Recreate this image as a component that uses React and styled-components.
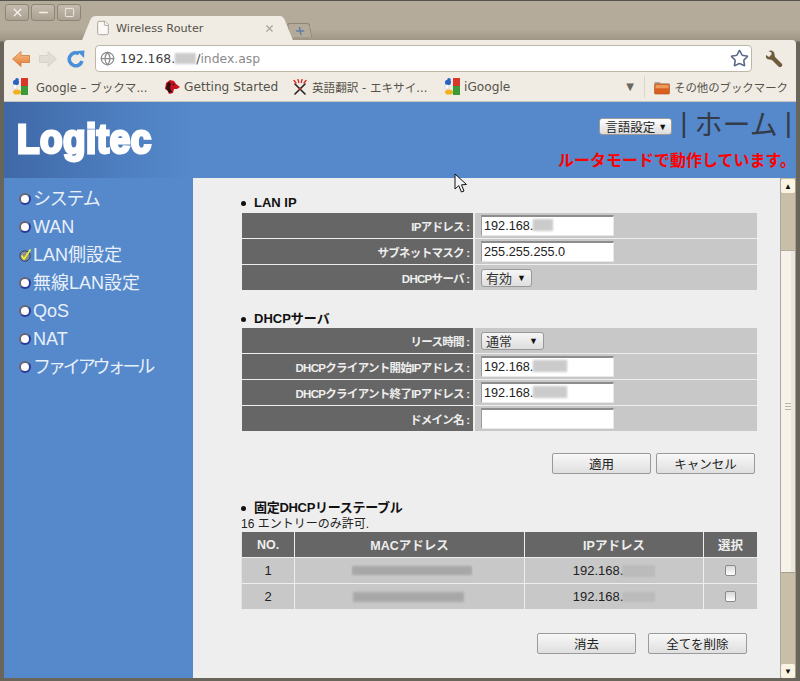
import React from "react";
import styled, { createGlobalStyle } from "styled-components";
import { X, Minus, Square, Plus, File, Globe, Star } from "lucide-react";

const UI_FONT = `"DejaVu Sans", "Noto Sans CJK JP", sans-serif`;
const PAGE_FONT = `"Liberation Sans", "Noto Sans CJK JP", sans-serif`;

const GlobalStyle = createGlobalStyle`
  html, body { margin: 0; padding: 0; background: #6a655a; }
  * { box-sizing: border-box; }
  svg { flex: none; }
`;

const Win = styled.div`
  position: relative;
  width: 800px;
  height: 681px;
  overflow: hidden;
  display: flex;
  flex-direction: column;
  padding: 0 4px 3px 4px;
  background: linear-gradient(#b5ab9b 0, #b5ab9b 28px, #9c9484 40px, #6a655a 41px);
  border-top: 1px solid #55524a;
  font-family: ${UI_FONT};
`;

const TitleBar = styled.div`
  height: 39px;
  flex: none;
  display: flex;
  align-items: flex-start;
  padding-left: 1px;
`;

const WinButtons = styled.div`
  display: flex;
  gap: 2px;
  margin-top: 3px;
`;

const WinBtn = styled.div`
  width: 24px;
  height: 17px;
  display: flex;
  align-items: center;
  justify-content: center;
  border: 1px solid #8d8676;
  border-radius: 3px;
  background: linear-gradient(#c4bbac, #aaa192);
  color: #f4f1ea;
`;

const Tab = styled.div`
  position: relative;
  width: 188px;
  height: 24px;
  margin: 15px 0 0 14px;
  padding: 0 8px 0 0;
  display: flex;
  align-items: center;
  gap: 5px;
  background: #f0ece4;
  border-radius: 4px 4px 0 0;
  font-size: 11.2px;
  color: #55524a;
  z-index: 1;
  &::before, &::after {
    content: "";
    position: absolute;
    top: 0;
    bottom: 0;
    width: 18px;
    background: #f0ece4;
  }
  &::before { left: -8px; transform: skewX(-22deg); border-radius: 4px 0 0 0; }
  &::after { right: -5px; transform: skewX(22deg); border-radius: 0 4px 0 0; }
  & > * { position: relative; z-index: 1; }
`;

const TabTitle = styled.span`
  flex: 1;
`;

const NewTab = styled.div`
  width: 23px;
  height: 14px;
  margin: 22px 0 0 5px;
  display: flex;
  align-items: center;
  justify-content: center;
  background: #b3aa99;
  border: 1px solid #8d8676;
  border-bottom: none;
  border-radius: 3px 3px 0 0;
  transform: skewX(10deg);
`;

const Chrome = styled.div`
  flex: none;
  height: 62px;
  background: #f0ece4;
  border-radius: 4px 4px 0 0;
  border-bottom: 1px solid #c9c6bf;
`;

const Toolbar = styled.div`
  height: 32px;
  display: flex;
  align-items: center;
  padding: 5px 0 0 8px;
`;

const NavIcon = styled.svg`
  width: ${(p) => p.$w || 18}px;
  height: 18px;
  margin-right: ${(p) => p.$mr || 0}px;
  margin-left: ${(p) => p.$ml || 0}px;
`;

const Omnibox = styled.div`
  width: 657px;
  height: 27px;
  margin-left: 10px;
  display: flex;
  align-items: center;
  padding: 0 2px 0 4px;
  gap: 5px;
  background: #fff;
  border: 1px solid #bdb7a6;
  border-radius: 4px;
  font-size: 12.4px;
  color: #3f3f3f;
`;

const Url = styled.span`
  flex: 1;
  white-space: nowrap;
`;

const UrlPath = styled.span`
  color: #8a8a8a;
`;

const Smudge = styled.span`
  display: inline-block;
  vertical-align: ${(p) => p.$va || "-1px"};
  width: ${(p) => p.$w}px;
  height: ${(p) => p.$h || 11}px;
  margin-left: ${(p) => p.$ml || 0}px;
  background: repeating-linear-gradient(90deg, ${(p) => p.$tone || "#9a9a9a"} 0 1px, #c4c4c4 1px 3px);
  filter: blur(${(p) => p.$blur || 1.2}px);
  opacity: ${(p) => p.$o || 0.7};
`;

const Bookmarks = styled.div`
  height: 29px;
  display: flex;
  align-items: center;
  padding-left: 8px;
  font-size: 11.6px;
  color: #55524a;
`;

const Mark = styled.div`
  display: flex;
  align-items: center;
  gap: ${(p) => p.$gap || 4}px;
  width: ${(p) => p.$w}px;
  flex: none;
  font-size: ${(p) => p.$fs || 11.6}px;
  white-space: nowrap;
`;

const BookSep = styled.div`
  width: 1px;
  height: 22px;
  margin: 0 9px 0 10px;
  background: #dcd7cc;
`;

const OverflowArrow = styled.span`
  margin-left: auto;
  font-size: 10px;
  color: #6b675e;
`;

const Page = styled.div`
  flex: 1;
  min-height: 0;
  display: flex;
  flex-direction: column;
  background: #5589cb;
  font-family: ${PAGE_FONT};
`;

const Header = styled.header`
  flex: none;
  height: 76px;
  display: flex;
  justify-content: space-between;
  background: linear-gradient(90deg, #3f68a7 0, #4f81c2 130px, #5589cb 190px);
`;

const Logo = styled.div`
  margin: 14px 0 0 13px;
  font-size: 40px;
  line-height: 46px;
  font-weight: 700;
  color: #fff;
  letter-spacing: 0.6px;
  -webkit-text-stroke: 3px #fff;
  transform: scaleX(0.92);
  transform-origin: left;
`;

const HeaderRight = styled.div`
  display: flex;
  flex-direction: column;
  align-items: flex-end;
`;

const HomeRow = styled.div`
  display: flex;
  align-items: center;
  height: 38px;
  margin: 2px 4px 0 0;
  color: #333c48;
  font-size: 28px;
  gap: 7px;
`;

const Lang = styled.div`
  margin: 7px 1px 0 0;
  padding: 0 4px 0 5px;
  width: 73px;
  height: 17px;
  display: flex;
  align-items: center;
  justify-content: space-between;
  font-size: 12.5px;
  color: #222;
  background: linear-gradient(#fff, #dcdcdc);
  border: 1px solid #9a9a9a;
  border-radius: 3px;
`;

const Caret = styled.span`
  font-size: 9px;
  color: #111;
`;

const Status = styled.div`
  margin-top: 9px;
  font-size: 16px;
  line-height: 20px;
  font-weight: 700;
  color: #f00;
  white-space: nowrap;
`;

const Body = styled.div`
  flex: 1;
  min-height: 0;
  display: flex;
`;

const Nav = styled.nav`
  flex: none;
  width: 189px;
  padding: 7px 0 0 15px;
`;

const NavItem = styled.div`
  height: 28px;
  display: flex;
  align-items: center;
  gap: 2px;
  font-size: 18px;
  line-height: 20px;
  letter-spacing: ${(p) => p.$ls || 0}px;
  color: #e9f0fa;
  white-space: nowrap;
`;

const Radio = styled.span`
  flex: none;
  width: 12px;
  height: 12px;
  border-radius: 50%;
  background: #fff;
  border: 2px solid #2a3a9a;
  border-top-color: #667;
  border-left-color: #667;
`;

const Check = styled.svg`
  width: 12px;
  height: 14px;
`;

const Main = styled.main`
  flex: 1;
  min-width: 0;
  display: flex;
  background: #eeeeee;
`;

const Content = styled.div`
  flex: 1;
  padding: 17px 23px 0 49px;
  font-size: 12px;
  color: #111;
`;

const SectionTitle = styled.h3`
  margin: ${(p) => p.$mt || 0}px 0 ${(p) => p.$mb || 2}px;
  display: flex;
  align-items: center;
  gap: 8px;
  font-size: 13px;
  line-height: 16px;
  font-weight: 700;
  letter-spacing: ${(p) => p.$ls || 0}px;
  &::before {
    content: "";
    width: 5px;
    height: 5px;
    margin-left: -1px;
    border-radius: 50%;
    background: #111;
  }
`;

const Note = styled.div`
  font-size: 12px;
  line-height: 14px;
  margin: -1px 0 1px -1px;
  color: #222;
`;

const Form = styled.div`
  display: flex;
  flex-direction: column;
  gap: 1px;
`;

const Row = styled.div`
  height: 25px;
  display: grid;
  grid-template-columns: 231px 1fr;
  gap: 2px;
`;

const Label = styled.div`
  background: #666666;
  color: #eeeeee;
  font-weight: 700;
  font-size: 11.5px;
  letter-spacing: -0.7px;
  display: flex;
  align-items: center;
  justify-content: flex-end;
  padding-right: 1px;
  white-space: pre;
`;

const Value = styled.div`
  background: #c8c8c8;
  display: flex;
  align-items: center;
  padding-left: 6px;
`;

const Field = styled.div`
  width: 133px;
  height: 21px;
  padding: 1px 0 0 2px;
  background: #fff;
  border-top: 2px solid #8d8d8d;
  border-left: 1px solid #9a9a9a;
  border-right: 1px solid #e8e8e8;
  border-bottom: 1px solid #e8e8e8;
  font-size: 12.7px;
  line-height: 16px;
  color: #222;
  white-space: nowrap;
`;

const Select = styled.div`
  width: ${(p) => p.$w}px;
  height: 18px;
  display: flex;
  align-items: center;
  justify-content: space-between;
  padding: 0 5px 0 4px;
  font-size: 13px;
  color: #333;
  background: linear-gradient(#f6f6f6, #dedede);
  border: 1px solid #999;
  border-radius: 3px;
`;

const Actions = styled.div`
  display: flex;
  justify-content: flex-end;
  gap: ${(p) => p.$gap}px;
  margin: ${(p) => p.$mt}px ${(p) => p.$mr}px 0 0;
`;

const Button = styled.div`
  width: 99px;
  height: 21px;
  display: flex;
  align-items: center;
  justify-content: center;
  font-size: 12.5px;
  color: #222;
  background: linear-gradient(#f8f8f8, #dfdfdf);
  border: 1px solid #9a9a9a;
  border-radius: 2px;
`;

const Table = styled.div`
  display: grid;
  grid-template-columns: 52px 229px 178px 1fr;
  grid-auto-rows: 25px;
  gap: 1px;
  margin-left: -1px;
  border-left: 1px solid #e4e4e4;
`;

const HeadCell = styled.div`
  background: #666666;
  color: #eee;
  font-weight: 700;
  font-size: 12.5px;
  display: flex;
  align-items: center;
  justify-content: center;
`;

const Cell = styled.div`
  background: #c8c8c8;
  color: #222;
  font-size: 13px;
  display: flex;
  align-items: center;
  justify-content: center;
`;

const Box = styled.span`
  width: 11px;
  height: 11px;
  margin-left: -1px;
  background: linear-gradient(#d8d8d8, #fff);
  border: 1px solid #8a8a8a;
  border-radius: 2px;
`;

const Scrollbar = styled.div`
  flex: none;
  width: 16px;
  display: flex;
  flex-direction: column;
  padding-top: 1px;
  background: #c9bfa9;
  border-left: 1px solid #a8a8a8;
  border-right: 1px solid #a8a08e;
`;

const ScrollBtn = styled.div`
  height: 14px;
  flex: none;
  display: flex;
  align-items: center;
  justify-content: center;
  font-size: 8px;
  color: #111;
  background: #fbf3e2;
  border-radius: 2px;
`;

const Thumb = styled.div`
  height: 323px;
  margin-top: 57px;
  flex: none;
  display: flex;
  align-items: flex-start;
  justify-content: center;
  padding-top: 152px;
  background: linear-gradient(90deg, #f6f2ea 0 70%, #ece7de 70%);
  border-top: 1px solid #b5ae9f;
  border-bottom: 1px solid #a8a08e;
`;

const Grip = styled.div`
  width: 6px;
  height: 7px;
  background: repeating-linear-gradient(#b9b3a6 0 1px, transparent 1px 3px);
`;

const Track = styled.div`
  flex: 1;
`;

const Pointer = styled.svg`
  position: absolute;
  left: 454px;
  top: 172px;
  width: 15px;
  height: 21px;
`;

function GoogleIcon() {
  return (
    <svg width="16" height="17" viewBox="0 0 16 17">
      <rect x="9" y="0" width="7" height="8" fill="#d8372a" />
      <rect x="9" y="8" width="7" height="9" fill="#3a9a3a" />
      <rect x="1" y="2" width="6" height="5" rx="2" fill="#2a62c4" />
      <circle cx="5" cy="1.8" r="1.8" fill="#2a62c4" />
      <circle cx="3" cy="9" r="2.2" fill="#fff" stroke="#bbb" strokeWidth=".5" />
      <ellipse cx="5" cy="14" rx="4" ry="2.6" fill="#f2b01e" />
    </svg>
  );
}

function ShadowmanIcon() {
  return (
    <svg width="16" height="16" viewBox="0 0 16 16">
      <path d="M2 4 L6 1 L10 2 L12 5 L16 8 L13 10 L10 10 L9 14 L5 15 L4 12 L1 10 Z" fill="#c8141c" />
      <path d="M4 3 L7 4 L6 9 L8 13 L5 14 L2 9 Z" fill="#2a1010" />
      <circle cx="9.5" cy="5.5" r=".8" fill="#111" />
    </svg>
  );
}

function ExciteIcon() {
  return (
    <svg width="16" height="16" viewBox="0 0 16 16" fill="none" strokeLinecap="round">
      <path d="M3 5 L13 15 M13 5 L3 15" stroke="#222" strokeWidth="1.6" />
      <path d="M2 1.5 L4 4 M6 0.5 L6.8 3.5 M10 0.5 L9.2 3.5 M14 1.5 L12 4" stroke="#d8261c" strokeWidth="1.3" />
      <circle cx="8" cy="9.5" r="1.2" fill="#d8261c" />
    </svg>
  );
}

function FolderIcon() {
  return (
    <svg width="16" height="16" viewBox="0 0 16 16">
      <path d="M0.5 3 h5 l1.5 1.5 h8.5 v1 h-15 z" fill="#a9a69e" />
      <rect x="0.5" y="5" width="15" height="10" rx="1" fill="#d85f20" stroke="#b24d18" strokeWidth=".6" />
      <rect x="1.5" y="5.8" width="13" height="3.5" fill="#ec9a5c" />
    </svg>
  );
}

const navItems = [
  { label: "システム", ls: -1.2 },
  { label: "WAN" },
  { label: "LAN側設定", checked: true },
  { label: "無線LAN設定" },
  { label: "QoS" },
  { label: "NAT" },
  { label: "ファイアウォール", ls: -3.1 },
];

function App() {
  return (
    <Win>
      <GlobalStyle />
      <TitleBar>
        <WinButtons>
          <WinBtn><X size={13} strokeWidth={2.5} /></WinBtn>
          <WinBtn><Minus size={13} strokeWidth={2.5} /></WinBtn>
          <WinBtn><Square size={11} strokeWidth={2} /></WinBtn>
        </WinButtons>
        <Tab>
          <File size={16} fill="#fbfaf7" color="#a9a69e" strokeWidth={1.5} />
          <TabTitle>Wireless Router</TabTitle>
          <X size={11} color="#a8a49b" strokeWidth={2.5} />
        </Tab>
        <NewTab><Plus size={12} strokeWidth={3} color="#5f7ea8" /></NewTab>
      </TitleBar>

      <Chrome>
        <Toolbar>
          <NavIcon viewBox="0 0 18 18" $mr={9}>
            <defs>
              <linearGradient id="backFill" x1="0" y1="0" x2="0" y2="1">
                <stop offset="0" stopColor="#f8c08a" />
                <stop offset="1" stopColor="#e27a32" />
              </linearGradient>
            </defs>
            <path d="M0.5 9 L9 1.5 V5.5 H17.5 V12.5 H9 V16.5 Z" fill="url(#backFill)" stroke="#d0783c" strokeWidth=".8" />
          </NavIcon>
          <NavIcon viewBox="0 0 18 18" $mr={10}>
            <path d="M17.5 9 L9 1.5 V5.5 H0.5 V12.5 H9 V16.5 Z" fill="#e0ddd6" stroke="#d2cfc7" strokeWidth=".8" />
          </NavIcon>
          <NavIcon viewBox="0 0 18 18">
            <path d="M15 11 A6.5 6.5 0 1 1 12 3.6" fill="none" stroke="#4a90d8" strokeWidth="3.6" />
            <path d="M10 1 L17.5 0.5 L17 8 Z" fill="#4a90d8" />
          </NavIcon>
          <Omnibox>
            <Globe size={15} color="#8d8d8d" strokeWidth={2} />
            <Url>192.168.<Smudge $w={21} />/<UrlPath>index.asp</UrlPath></Url>
            <Star size={19} color="#5a6a88" strokeWidth={2} />
          </Omnibox>
          <NavIcon viewBox="0 0 18 18" $ml={13}>
            <path d="M7 7 L15 15" stroke="#6e5a3c" strokeWidth="4.4" strokeLinecap="round" />
            <path d="M1 5 L4 7 L6.5 5.5 L6.5 2.5 L3.5 1 C6 -0.5 10 1 9.5 5 L10 7 L7 10 L5 9.5 C2 10 0.5 8 1 5 Z" fill="#6e5a3c" />
          </NavIcon>
        </Toolbar>
        <Bookmarks>
          <Mark $w={152} $gap={8}><GoogleIcon />Google – ブックマ...</Mark>
          <Mark $w={128} $fs={12.2}><ShadowmanIcon />Getting Started</Mark>
          <Mark $w={152}><ExciteIcon />英語翻訳 - エキサイ...</Mark>
          <Mark $w={100} $fs={12.2}><GoogleIcon />iGoogle</Mark>
          <OverflowArrow>▼</OverflowArrow>
          <BookSep />
          <Mark $w={142} $fs={11.4}><FolderIcon />その他のブックマーク</Mark>
        </Bookmarks>
      </Chrome>

      <Page>
        <Header>
          <Logo>Logitec</Logo>
          <HeaderRight>
            <HomeRow>
              <Lang>言語設定<Caret>▼</Caret></Lang>
              <span>|</span>
              <span>ホーム</span>
              <span>|</span>
            </HomeRow>
            <Status>ルータモードで動作しています。</Status>
          </HeaderRight>
        </Header>
        <Body>
          <Nav>
            {navItems.map((item) => (
              <NavItem key={item.label} $ls={item.ls}>
                {item.checked ? (
                  <Check viewBox="0 0 12 14">
                    <circle cx="6" cy="8" r="5.2" fill="#8a8f98" stroke="#333c66" />
                    <path d="M2.5 7.5 L5 11 L11.5 1.5" fill="none" stroke="#f4f41c" strokeWidth="1.6" />
                  </Check>
                ) : (
                  <Radio />
                )}
                {item.label}
              </NavItem>
            ))}
          </Nav>
          <Main>
            <Content>
              <SectionTitle>LAN IP</SectionTitle>
              <Form>
                <Row>
                  <Label>IPアドレス : </Label>
                  <Value><Field>192.168.<Smudge $w={20} $h={12} /></Field></Value>
                </Row>
                <Row>
                  <Label>サブネットマスク : </Label>
                  <Value><Field>255.255.255.0</Field></Value>
                </Row>
                <Row>
                  <Label>DHCPサーバ : </Label>
                  <Value><Select $w={51}>有効<Caret>▼</Caret></Select></Value>
                </Row>
              </Form>

              <SectionTitle $mt={21} $mb={1}>DHCPサーバ</SectionTitle>
              <Form>
                <Row>
                  <Label>リース時間 : </Label>
                  <Value><Select $w={63}>通常<Caret>▼</Caret></Select></Value>
                </Row>
                <Row>
                  <Label>DHCPクライアント開始IPアドレス : </Label>
                  <Value><Field>192.168.<Smudge $w={34} $h={12} /></Field></Value>
                </Row>
                <Row>
                  <Label>DHCPクライアント終了IPアドレス : </Label>
                  <Value><Field>192.168.<Smudge $w={34} $h={12} /></Field></Value>
                </Row>
                <Row>
                  <Label>ドメイン名 : </Label>
                  <Value><Field /></Value>
                </Row>
              </Form>

              <Actions $gap={5} $mt={22} $mr={2}>
                <Button>適用</Button>
                <Button>キャンセル</Button>
              </Actions>

              <SectionTitle $mt={26} $ls={-0.3}>固定DHCPリーステーブル</SectionTitle>
              <Note>16 エントリーのみ許可.</Note>
              <Table>
                <HeadCell>NO.</HeadCell>
                <HeadCell>MACアドレス</HeadCell>
                <HeadCell>IPアドレス</HeadCell>
                <HeadCell>選択</HeadCell>
                <Cell>1</Cell>
                <Cell><Smudge $w={118} $h={9} $o={0.95} $va="0" $ml={4} $tone="#6a6a6a" $blur={0.9} /></Cell>
                <Cell>192.168.<Smudge $w={32} $h={12} /></Cell>
                <Cell><Box /></Cell>
                <Cell>2</Cell>
                <Cell><Smudge $w={110} $h={10} $o={0.95} $va="0" $ml={-1} $tone="#6a6a6a" $blur={1.4} /></Cell>
                <Cell>192.168.<Smudge $w={32} $h={10} /></Cell>
                <Cell><Box /></Cell>
              </Table>

              <Actions $gap={12} $mt={24} $mr={10}>
                <Button>消去</Button>
                <Button>全てを削除</Button>
              </Actions>
            </Content>
            <Scrollbar>
              <ScrollBtn>▲</ScrollBtn>
              <Thumb><Grip /></Thumb>
              <Track />
              <ScrollBtn>▼</ScrollBtn>
            </Scrollbar>
          </Main>
        </Body>
      </Page>

      <Pointer viewBox="0 0 15 21">
        <path d="M1 1 V16 L4.8 12.6 L7.4 19 L10 18 L7.5 11.8 L12.5 11.5 Z" fill="#f4f4f4" stroke="#111" strokeWidth="1" />
      </Pointer>
    </Win>
  );
}

export default App;
